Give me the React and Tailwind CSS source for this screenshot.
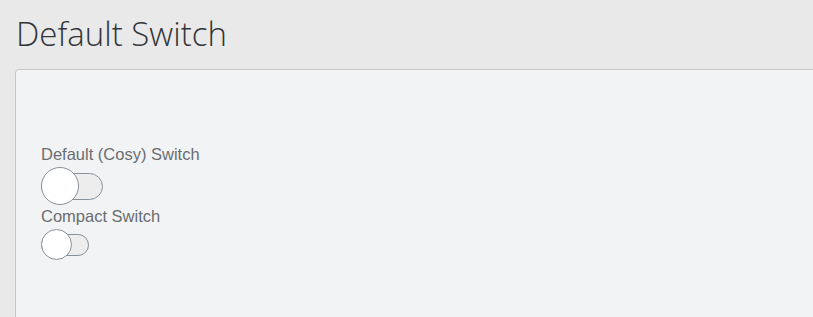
import React, { useState } from "react";

function Toggle({ compact }) {
  const [on, setOn] = useState(false);
  const track = compact ? "w-[48px] h-[22px]" : "w-[62px] h-[27px]";
  const knob = compact ? "w-[31px] h-[31px]" : "w-[38px] h-[38px]";
  return (
    <button
      type="button"
      onClick={() => setOn(!on)}
      className={`relative flex items-center ${compact ? "h-[31px] w-[48px]" : "h-[38px] w-[62px]"}`}
    >
      <span
        className={`${track} rounded-full border border-[#89919a] bg-[#ededed]`}
      />
      <span
        className={`absolute left-0 top-0 ${knob} rounded-full border border-[#89919a] bg-white`}
      />
    </button>
  );
}

export default function App() {
  return (
    <div
      className="h-[317px] w-[813px] overflow-hidden bg-[#e9e9e9]"
      style={{ fontFamily: "'Liberation Sans', Arial, sans-serif" }}
    >
      <h1
        className="pl-[16px] pt-[14px] text-[33px] font-light leading-[40px] text-[#32363a]"
        style={{ fontFamily: "'Open Sans', sans-serif", fontWeight: 300 }}
      >
        Default Switch
      </h1>
      <div className="ml-[15px] mt-[15px] h-[400px] w-[900px] rounded-tl-[4px] border border-[#c6c6c6] bg-[#f2f3f4] pl-[25px] pt-[75px]">
        <div className="text-[16.5px] leading-[19px] text-[#6a6d70]">
          Default (Cosy) Switch
        </div>
        <div className="mt-[3px]">
          <Toggle />
        </div>
        <div className="mt-[2px] text-[16.5px] leading-[19px] text-[#6a6d70]">
          Compact Switch
        </div>
        <div className="mt-[3px]">
          <Toggle compact />
        </div>
      </div>
    </div>
  );
}
